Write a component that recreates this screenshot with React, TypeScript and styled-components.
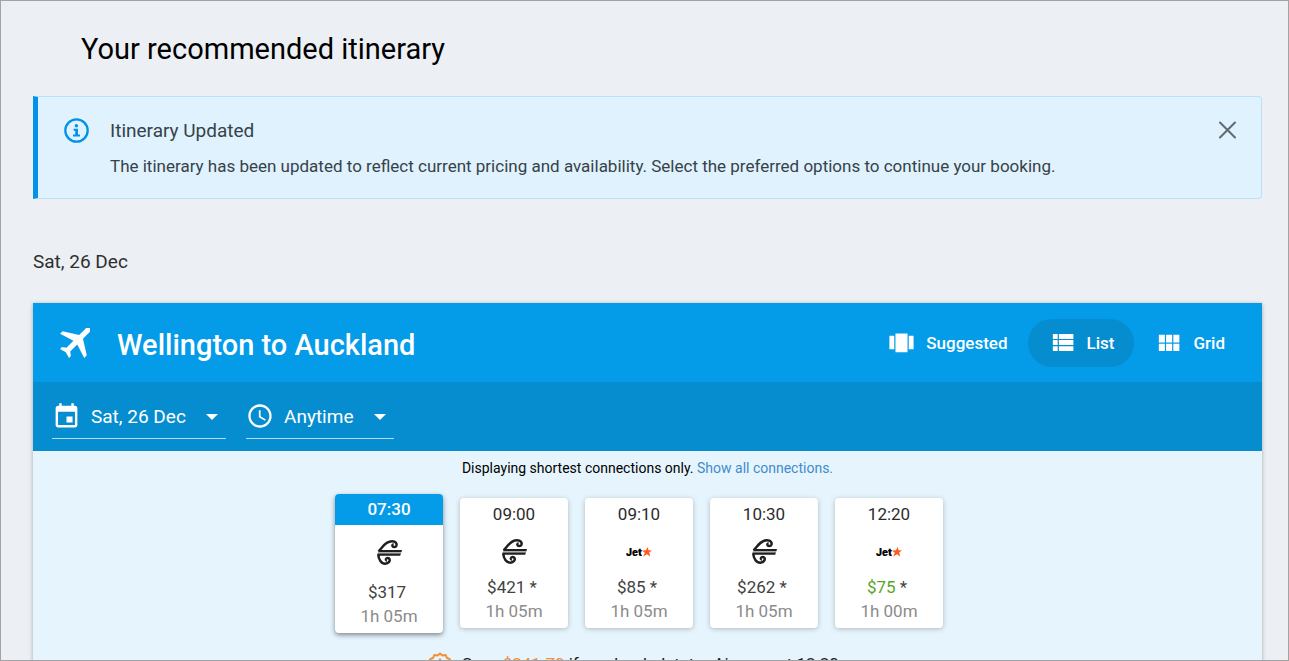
import React, { useState } from "react";
import styled, { createGlobalStyle } from "styled-components";

const GlobalStyle = createGlobalStyle`
  *, *::before, *::after { box-sizing: border-box; }
  body { margin: 0; background: #eceff3; font-family: Roboto, "Liberation Sans", sans-serif; color: #212121; }
  button, select { font: inherit; color: inherit; }
`;

const Frame = styled.div`
  height: 100vh;
  overflow: hidden;
  border: 1px solid #a3a3a3;
  background: #eceff3;
  padding: 0 26px 0 32px;
`;

const PageTitle = styled.h1`
  margin: 0;
  padding: 28px 0 27px 48px;
  font-size: 29px;
  line-height: 40px;
  font-weight: 400;
  color: #000;
`;

const Alert = styled.section`
  display: flex;
  align-items: flex-start;
  min-height: 103px;
  padding: 21px 24px 18px 26px;
  border: 1px solid #b9e2f8;
  border-left: 5px solid #0392e8;
  border-radius: 0 4px 4px 0;
  background: #e0f2fd;
`;

const AlertText = styled.div`
  flex: 1;
  margin-left: 21px;
  color: #36424a;
`;

const AlertTitle = styled.h2`
  margin: 0 0 9px;
  font-size: 19px;
  line-height: 26px;
  font-weight: 400;
`;

const AlertBody = styled.p`
  margin: 0;
  font-size: 17px;
  line-height: 26px;
`;

const IconButton = styled.button`
  display: flex;
  padding: 3px 0;
  border: 0;
  background: none;
  color: #616b72;
  cursor: pointer;
`;

const DayHeading = styled.h2`
  margin: 0;
  padding: 50px 0 28px;
  font-size: 19px;
  line-height: 26px;
  font-weight: 400;
  color: #2f2f2f;
`;

const Leg = styled.section`
  background: #e6f5fd;
  box-shadow: 0 1px 4px rgba(0, 0, 0, 0.3);
`;

const LegHeader = styled.header`
  display: flex;
  align-items: center;
  height: 79px;
  padding: 0 17px 0 27px;
  background: #049be8;
  color: #fff;
`;

const LegTitle = styled.h2`
  flex: 1;
  margin: 4px 0 0 27px;
  font-size: 29px;
  line-height: 40px;
  font-weight: 500;
`;

const Views = styled.nav`
  display: flex;
`;

const ViewButton = styled.button<{ $active: boolean }>`
  display: flex;
  align-items: center;
  gap: 10px;
  height: 48px;
  padding: 0 20px;
  border: 0;
  border-radius: 24px;
  background: ${(p) => (p.$active ? "#068dd0" : "transparent")};
  font-size: 17px;
  font-weight: 500;
  cursor: pointer;
`;

const FilterBar = styled.div`
  display: flex;
  gap: 20px;
  height: 69px;
  padding: 12px 19px;
  background: #068dd0;
  color: #fff;
`;

const Filter = styled.label`
  position: relative;
  display: flex;
  align-items: center;
  gap: 10px;
  border-bottom: 1px solid #b4dcf1;
`;

const FilterSelect = styled.select`
  appearance: none;
  height: 44px;
  padding: 0 40px 0 0;
  border: 0;
  background: none;
  font-size: 19px;
  outline: none;
  option { color: #212121; }
`;

const Caret = styled.svg`
  position: absolute;
  right: 8px;
  top: 20px;
  pointer-events: none;
`;

const Notice = styled.p`
  margin: 0;
  padding: 7px 0 6px;
  text-align: center;
  font-size: 14px;
  line-height: 20px;
  color: #000;
`;

const NoticeLink = styled.a`
  color: #428bca;
  text-decoration: none;
`;

const Flights = styled.div`
  display: flex;
  justify-content: center;
  align-items: flex-start;
  margin-top: 10px;
`;

const FlightCard = styled.button<{ $selected: boolean }>`
  display: flex;
  flex-direction: column;
  align-items: stretch;
  width: 108px;
  height: ${(p) => (p.$selected ? "139px" : "130px")};
  margin: ${(p) => (p.$selected ? "0 17px 0 0" : "4px 17px 5px 0")};
  padding: 0;
  overflow: hidden;
  border: 0;
  border-radius: 4px;
  background: #fff;
  box-shadow: ${(p) => (p.$selected ? "0 2px 5px rgba(0,0,0,.45)" : "0 1px 5px rgba(0,0,0,.25)")};
  font-size: 17px;
  line-height: 24px;
  text-align: center;
  cursor: pointer;
`;

const Time = styled.span<{ $selected: boolean }>`
  padding: ${(p) => (p.$selected ? "3px 0 4px" : "4px 0 2px")};
  background: ${(p) => (p.$selected ? "#049be8" : "transparent")};
  color: ${(p) => (p.$selected ? "#fff" : "#2b2b2b")};
  font-weight: ${(p) => (p.$selected ? 500 : 400)};
`;

const Airline = styled.span<{ $selected: boolean }>`
  display: flex;
  justify-content: center;
  align-items: center;
  height: ${(p) => (p.$selected ? "55px" : "47px")};
`;

const Price = styled.span<{ $best: boolean }>`
  padding-right: 4px;
  color: #424242;
  b { font-weight: 400; color: ${(p) => (p.$best ? "#5aa51e" : "inherit")}; }
`;

const Duration = styled.span`
  color: #8b8b8b;
`;

const JetWordmark = styled.span`
  font-family: Inter, Roboto, sans-serif;
  font-size: 10px;
  line-height: 12px;
  font-weight: 900;
  color: #000;
`;

const Saving = styled.p`
  display: flex;
  justify-content: center;
  align-items: center;
  gap: 10px;
  margin: 0;
  padding: 18px 28px 20px 0;
  font-size: 17px;
  line-height: 26px;
`;

const SavingAmount = styled.span`
  color: #f98b32;
`;

const InfoIcon = () => (
  <svg width="25" height="25" viewBox="0 0 25 25" fill="none" aria-hidden="true">
    <circle cx="12.5" cy="12.5" r="11.2" stroke="#0392e8" strokeWidth="2.3" />
    <circle cx="12.4" cy="7.8" r="1.7" fill="#0392e8" />
    <path d="M9.6 10.8h4.4v5.8h2v2H9v-2h2.2v-3.8H9.6z" fill="#0392e8" />
  </svg>
);

const CloseIcon = () => (
  <svg width="19" height="18" viewBox="0 0 19 18" fill="none" aria-hidden="true">
    <path d="M2 1.5l15 15M17 1.5l-15 15" stroke="currentColor" strokeWidth="2.1" strokeLinecap="round" />
  </svg>
);

const PlaneIcon = () => (
  <svg width="30" height="30" viewBox="2.05 4.55 16.7 16.7" fill="currentColor" aria-hidden="true">
    <path
      transform="rotate(45 12 12)"
      d="M21 16v-2l-8-5V3.500c0-.83-.67-1.500-1.500-1.500S10 2.670 10 3.500V9l-8 5v2l8-2.500V19l-2 1.500V22l3.500-1 3.500 1v-1.500L13 19v-5.500l8 2.500z"
    />
  </svg>
);

const Glyph = ({ d, size }: { d: string; size: number }) => (
  <svg width={size} height={size} viewBox="0 0 24 24" fill="currentColor" aria-hidden="true">
    <path d={d} />
  </svg>
);

const CAROUSEL = "M7 20h10V4.500H7V20zm-5-2.500h4v-11H2v11zM18 6.500v11h4v-11h-4z";
const LIST =
  "M4 14h4v-4H4v4zm0 5h4v-4H4v4zM4 9h4V5H4v4zm5 5h12v-4H9v4zm0 5h12v-4H9v4zM9 5v4h12V5H9z";
const GRID =
  "M4 12h5V5.500H4V12zm0 7h5v-6H4v6zm6 0h5v-6h-5v6zm6 0h5v-6h-5v6zm-6-7h5V5.500h-5V12zm6-6.500V12h5V5.500h-5z";
const EVENT =
  "M17 12h-5v5h5v-5zM16 1v2H8V1H6v2H5c-1.110 0-1.990.900-1.990 2L3 19c0 1.100.890 2 2 2h14c1.100 0 2-.900 2-2V5c0-1.100-.900-2-2-2h-1V1h-2zm3 18H5V8h14v11z";
const CLOCK =
  "M11.990 2C6.470 2 2 6.480 2 12s4.470 10 9.990 10C17.520 22 22 17.520 22 12S17.520 2 11.990 2zM12 20c-4.420 0-8-3.580-8-8s3.580-8 8-8 8 3.580 8 8-3.580 8-8 8zm.500-13H11v6l5.250 3.150.750-1.230-4.500-2.670z";

const CaretIcon = () => (
  <Caret width="12" height="6" viewBox="0 0 12 6" fill="currentColor" aria-hidden="true">
    <path d="M0 0h12L6 6z" />
  </Caret>
);

const AirNzLogo = () => (
  <svg width="25" height="25" viewBox="0 0 25 25" fill="none" role="img" aria-label="Air New Zealand">
    <g stroke="#1f1f1f" strokeWidth="2.500">
      <path d="M1.500 11.200C5 8.500 7.500 1.400 15 1.300c4 0 5.100 2.500 4.400 4.400-.7 1.700-3.500 1.900-4 .2-.2-1 .4-1.500 1.200-1.400" />
      <path d="M1.300 14.500c.2 5 3 9.200 7 9.200 3.500 0 5-2.700 4.200-4.700-.7-1.600-3.300-1.400-3.600.2-.1.900.5 1.300 1 1.200" />
    </g>
    <path d="M2.500 10H25l-.6 2.200H1z" fill="#1f1f1f" />
    <path d="M1 12.200h23.400l-.5 1.300H.6z" fill="#a8a8a8" />
    <path d="M.6 13.500h23.300l-.7 2.200H.3z" fill="#1f1f1f" />
  </svg>
);

const JetstarLogo = () => (
  <>
    <JetWordmark>Jet</JetWordmark>
    <svg width="10" height="10" viewBox="0 0 10 10" role="img" aria-label="Jetstar">
      <path d="M5.800 0l.7 3.200L10 3.500 7.200 5.600 8.200 9.500 5 7.300 1.200 9.500 2.800 5.800 0 3.500l3.900-.2z" fill="#ff5a1f" />
    </svg>
  </>
);

const BadgeIcon = () => (
  <svg width="24" height="24" viewBox="0 0 24 24" fill="none" stroke="#f98b32" strokeWidth="2" aria-hidden="true">
    <path
      strokeLinejoin="round"
      d="M12 1.500l2.500 2 3.200-.5 1.200 3 3 1.200-.5 3.200 1.600 2.100-1.600 2.500.5 3.200-3 1.200-1.200 3-3.200-.5-2.500 1.600-2.500-1.600-3.200.5-1.200-3-3-1.200.5-3.200L1 12.500l1.600-2.100-.5-3.200 3-1.200 1.200-3 3.200.5z"
    />
    <path d="M12 6.500v11M14.500 9.500c-1-1.500-5-1.300-5 .8 0 2.400 5 1.200 5 3.600 0 2-4 2.200-5 .6" />
  </svg>
);

type Flight = { time: string; airline: "nz" | "jq"; price: string; note: boolean; duration: string; best?: boolean };

const flights: Flight[] = [
  { time: "07:30", airline: "nz", price: "$317", note: false, duration: "1h 05m" },
  { time: "09:00", airline: "nz", price: "$421", note: true, duration: "1h 05m" },
  { time: "09:10", airline: "jq", price: "$85", note: true, duration: "1h 05m" },
  { time: "10:30", airline: "nz", price: "$262", note: true, duration: "1h 05m" },
  { time: "12:20", airline: "jq", price: "$75", note: true, duration: "1h 00m", best: true },
];

const views = [
  { name: "Suggested", icon: CAROUSEL },
  { name: "List", icon: LIST },
  { name: "Grid", icon: GRID },
];

export default function App() {
  const [view, setView] = useState("List");
  const [selected, setSelected] = useState("07:30");
  const [alertOpen, setAlertOpen] = useState(true);

  return (
    <Frame>
      <GlobalStyle />
      <PageTitle>Your recommended itinerary</PageTitle>
      {alertOpen && (
        <Alert>
          <InfoIcon />
          <AlertText>
            <AlertTitle>Itinerary Updated</AlertTitle>
            <AlertBody>
              The itinerary has been updated to reflect current pricing and availability. Select the preferred options to
              continue your booking.
            </AlertBody>
          </AlertText>
          <IconButton aria-label="Close" onClick={() => setAlertOpen(false)}>
            <CloseIcon />
          </IconButton>
        </Alert>
      )}
      <DayHeading>Sat, 26 Dec</DayHeading>
      <Leg>
        <LegHeader>
          <PlaneIcon />
          <LegTitle>Wellington to Auckland</LegTitle>
          <Views>
            {views.map((v) => (
              <ViewButton key={v.name} $active={v.name === view} onClick={() => setView(v.name)}>
                <Glyph d={v.icon} size={29} />
                {v.name}
              </ViewButton>
            ))}
          </Views>
        </LegHeader>
        <FilterBar>
          <Filter>
            <Glyph d={EVENT} size={29} />
            <FilterSelect aria-label="Date">
              <option>Sat, 26 Dec</option>
            </FilterSelect>
            <CaretIcon />
          </Filter>
          <Filter>
            <Glyph d={CLOCK} size={28} />
            <FilterSelect aria-label="Time">
              <option>Anytime</option>
            </FilterSelect>
            <CaretIcon />
          </Filter>
        </FilterBar>
        <Notice>
          Displaying shortest connections only. <NoticeLink href="#all">Show all connections.</NoticeLink>
        </Notice>
        <Flights>
          {flights.map((f) => {
            const on = f.time === selected;
            return (
              <FlightCard key={f.time} $selected={on} aria-pressed={on} onClick={() => setSelected(f.time)}>
                <Time $selected={on}>{f.time}</Time>
                <Airline $selected={on}>{f.airline === "nz" ? <AirNzLogo /> : <JetstarLogo />}</Airline>
                <Price $best={!!f.best}>
                  <b>{f.price}</b>
                  {f.note ? " *" : ""}
                </Price>
                <Duration>{f.duration}</Duration>
              </FlightCard>
            );
          })}
        </Flights>
        <Saving>
          <BadgeIcon />
          <span>
            Save <SavingAmount>$241.70</SavingAmount> if you book Jetstar Airways at 12:20
          </span>
        </Saving>
      </Leg>
    </Frame>
  );
}
